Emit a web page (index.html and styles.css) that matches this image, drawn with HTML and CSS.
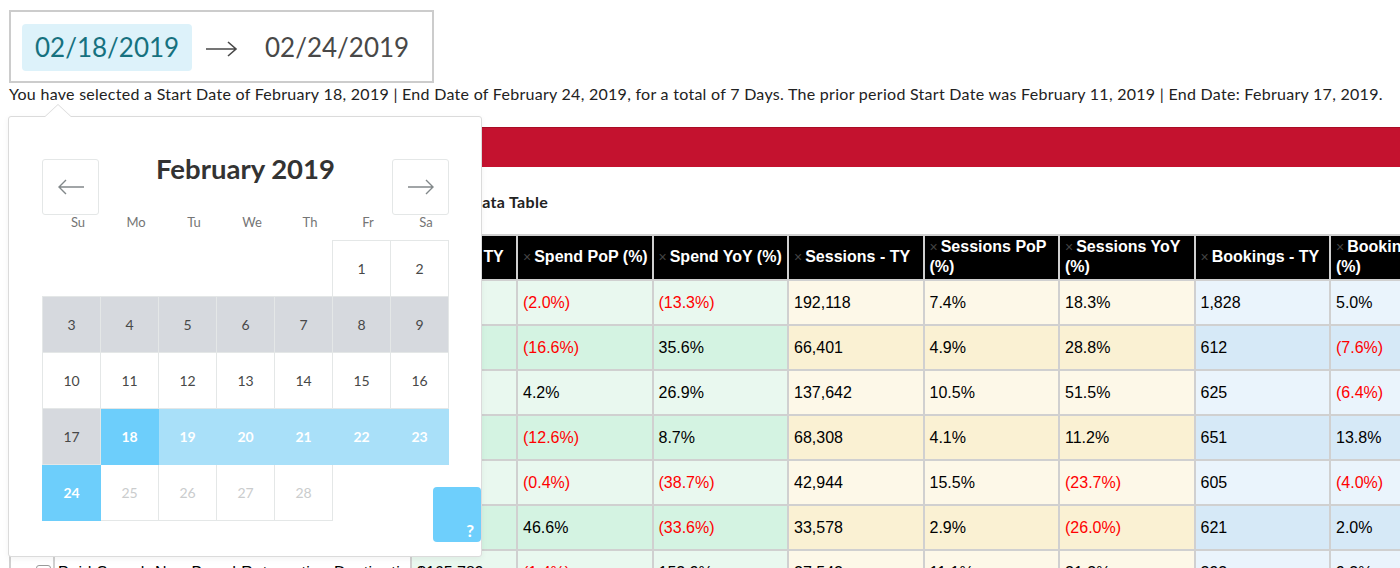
FILE: index.html
```html
<!DOCTYPE html>
<html lang="en">
<head>
    <meta charset="UTF-8">
    <meta name="viewport" content="width=device-width, initial-scale=1.0">
    <title>Channel Performance Report</title>
    <link rel="stylesheet" href="styles.css">
</head>
<body>
    <div class="page">
        <div class="date-range">
            <div class="date-input active">02/18/2019</div>
            <svg class="range-arrow" width="33" height="16" viewBox="0 0 33 16"><path d="M1 8h30M23 1l8 7-8 7" fill="none" stroke="#484848" stroke-width="1.6"/></svg>
            <div class="date-input">02/24/2019</div>
        </div>
        <p class="summary">You have selected a Start Date of February 18, 2019 | End Date of February 24, 2019, for a total of 7 Days. The prior period Start Date was February 11, 2019 | End Date: February 17, 2019.</p>

        <div class="banner"></div>

        <h3 class="table-title">Data Table</h3>

        <div class="table-wrap">
            <table class="report">
                <colgroup>
                    <col style="width:44px"><col style="width:357px"><col style="width:106px">
                    <col style="width:135.5px"><col style="width:135.5px"><col style="width:135.5px">
                    <col style="width:135.5px"><col style="width:135.5px"><col style="width:135.5px">
                    <col style="width:135.5px"><col style="width:135.5px">
                </colgroup>
                <thead>
                    <tr>
                        <th></th>
                        <th><span class="x">×</span>Channel</th>
                        <th class="tight"><span class="x">×</span>Spend - TY</th>
                        <th><span class="x">×</span>Spend PoP (%)</th>
                        <th><span class="x">×</span>Spend YoY (%)</th>
                        <th><span class="x">×</span>Sessions - TY</th>
                        <th><span class="x">×</span>Sessions PoP (%)</th>
                        <th><span class="x">×</span>Sessions YoY (%)</th>
                        <th><span class="x">×</span>Bookings - TY</th>
                        <th><span class="x">×</span>Bookings PoP (%)</th>
                        <th><span class="x">×</span>Bookings YoY (%)</th>
                    </tr>
                </thead>
                <tbody>
                    <tr>
                        <td class="chk-cell"><span class="chk"></span></td>
                        <td class="name">Paid Search Brand</td>
                        <td class="g">$41,256</td>
                        <td class="g neg">(2.0%)</td>
                        <td class="g neg">(13.3%)</td>
                        <td class="y">192,118</td>
                        <td class="y">7.4%</td>
                        <td class="y">18.3%</td>
                        <td class="b">1,828</td>
                        <td class="b">5.0%</td>
                        <td class="b">12.1%</td>
                    </tr>
                    <tr>
                        <td class="chk-cell"><span class="chk"></span></td>
                        <td class="name">Paid Search Non-Brand</td>
                        <td class="g">$23,890</td>
                        <td class="g neg">(16.6%)</td>
                        <td class="g">35.6%</td>
                        <td class="y">66,401</td>
                        <td class="y">4.9%</td>
                        <td class="y">28.8%</td>
                        <td class="b">612</td>
                        <td class="b neg">(7.6%)</td>
                        <td class="b">9.4%</td>
                    </tr>
                    <tr>
                        <td class="chk-cell"><span class="chk"></span></td>
                        <td class="name">Display Prospecting</td>
                        <td class="g">$20,133</td>
                        <td class="g">4.2%</td>
                        <td class="g">26.9%</td>
                        <td class="y">137,642</td>
                        <td class="y">10.5%</td>
                        <td class="y">51.5%</td>
                        <td class="b">625</td>
                        <td class="b neg">(6.4%)</td>
                        <td class="b">3.3%</td>
                    </tr>
                    <tr>
                        <td class="chk-cell"><span class="chk"></span></td>
                        <td class="name">Paid Social</td>
                        <td class="g">$18,721</td>
                        <td class="g neg">(12.6%)</td>
                        <td class="g">8.7%</td>
                        <td class="y">68,308</td>
                        <td class="y">4.1%</td>
                        <td class="y">11.2%</td>
                        <td class="b">651</td>
                        <td class="b">13.8%</td>
                        <td class="b">6.2%</td>
                    </tr>
                    <tr>
                        <td class="chk-cell"><span class="chk"></span></td>
                        <td class="name">Metasearch</td>
                        <td class="g">$17,648</td>
                        <td class="g neg">(0.4%)</td>
                        <td class="g neg">(38.7%)</td>
                        <td class="y">42,944</td>
                        <td class="y">15.5%</td>
                        <td class="y neg">(23.7%)</td>
                        <td class="b">605</td>
                        <td class="b neg">(4.0%)</td>
                        <td class="b neg">(1.8%)</td>
                    </tr>
                    <tr>
                        <td class="chk-cell"><span class="chk"></span></td>
                        <td class="name">Display Retargeting</td>
                        <td class="g">$17,106</td>
                        <td class="g">46.6%</td>
                        <td class="g neg">(33.6%)</td>
                        <td class="y">33,578</td>
                        <td class="y">2.9%</td>
                        <td class="y neg">(26.0%)</td>
                        <td class="b">621</td>
                        <td class="b">2.0%</td>
                        <td class="b">7.7%</td>
                    </tr>
                    <tr>
                        <td class="chk-cell"><span class="chk"></span></td>
                        <td class="name">Paid Search Non-Brand Retargeting Destination</td>
                        <td class="g">$165,789</td>
                        <td class="g neg">(1.4%)</td>
                        <td class="g">152.9%</td>
                        <td class="y">27,542</td>
                        <td class="y">11.1%</td>
                        <td class="y">21.3%</td>
                        <td class="b">293</td>
                        <td class="b">9.3%</td>
                        <td class="b">4.5%</td>
                    </tr>
                </tbody>
            </table>
        </div>
    </div>

    <!-- open date picker, drops down under the start date -->
    <div class="picker">
        <div class="picker-nav">
            <button class="nav-btn"><svg width="28" height="16" viewBox="0 0 28 16"><path d="M27 8H2M9 1L2 8l7 7" fill="none" stroke="#82888a" stroke-width="1.4"/></svg></button>
            <div class="month">February 2019</div>
            <button class="nav-btn"><svg width="28" height="16" viewBox="0 0 28 16"><path d="M1 8h25M19 1l7 7-7 7" fill="none" stroke="#82888a" stroke-width="1.4"/></svg></button>
        </div>
        <div class="weekdays">
            <span>Su</span><span>Mo</span><span>Tu</span><span>We</span><span>Th</span><span>Fr</span><span>Sa</span>
        </div>
        <table class="month-grid">
            <tr>
                <td class="empty"></td><td class="empty"></td><td class="empty"></td><td class="empty"></td><td class="empty"></td>
                <td>1</td><td>2</td>
            </tr>
            <tr>
                <td class="blocked">3</td><td class="blocked">4</td><td class="blocked">5</td><td class="blocked">6</td>
                <td class="blocked">7</td><td class="blocked">8</td><td class="blocked">9</td>
            </tr>
            <tr>
                <td>10</td><td>11</td><td>12</td><td>13</td><td>14</td><td>15</td><td>16</td>
            </tr>
            <tr>
                <td class="blocked">17</td><td class="sel">18</td><td class="span">19</td><td class="span">20</td>
                <td class="span">21</td><td class="span">22</td><td class="span">23</td>
            </tr>
            <tr>
                <td class="sel">24</td><td class="off">25</td><td class="off">26</td><td class="off">27</td><td class="off">28</td>
                <td class="empty"></td><td class="empty"></td>
            </tr>
        </table>
        <button class="help-btn">?</button>
    </div>
</body>
</html>
```

FILE: styles.css
```css
html, body { margin: 0; height: 100%; overflow: hidden; }
body { font-family: Lato, "Open Sans", sans-serif; color: #222; background: #fff; position: relative; }
.page { padding: 10px 0 0 9px; }

.date-range { width: 425px; box-sizing: border-box; border: 2px solid #ccc; padding: 12px 11px 10px; display: flex; align-items: center; }
.date-input { width: 170px; height: 47px; line-height: 47px; padding: 0 13px; box-sizing: border-box; font-size: 26px; color: #484848; border-radius: 4px; }
.date-input.active { background: #ddf2fa; color: #16717f; }
.range-arrow { margin: 3px 14px 0 13px; flex-shrink: 0; }
.summary { margin: 0; font-size: 16px; line-height: 21px; letter-spacing: 0.28px; color: #222; white-space: nowrap; }

.banner { margin-top: 23px; height: 40px; box-sizing: border-box; background: #c4122f; border-top: 1px solid #a80c25; }
.table-title { margin: 25px 0 22px; padding-left: 461px; font-size: 16px; line-height: 20px; font-weight: 700; color: #222; letter-spacing: 0.3px; }

.table-wrap { overflow: hidden; }
.report { border-collapse: collapse; table-layout: fixed; width: 1591px; font-family: "Liberation Sans", Arial, sans-serif; font-size: 16px; color: #000; }
.report th, .report td { border: 2px solid #d0d0d0; text-align: left; }
.report th { background: #000; color: #fff; font-weight: 700; line-height: 20px; padding: 1px 1px 2px 5px; }
.report th.tight { padding-left: 0; letter-spacing: -0.3px; }
.report td { padding: 12px 5px; line-height: 19px; white-space: nowrap; overflow: hidden; }
.report .x { color: #444; font-size: 14px; font-weight: 400; margin-right: 3px; }
.report .chk-cell { text-align: right; padding: 12px 2px 12px 0; }
.chk { display: inline-block; width: 13px; height: 13px; border: 1px solid #999; border-radius: 3px; background: #fff; vertical-align: -2px; }
.report .name { padding-left: 3px; letter-spacing: 0.45px; }
.report .g { background: #e9f8ef; }
.report .y { background: #fdf8e8; }
.report .b { background: #eaf4fc; }
.report tbody tr:nth-child(even) .g { background: #d4f3e2; }
.report tbody tr:nth-child(even) .y { background: #faf1d3; }
.report tbody tr:nth-child(even) .b { background: #d6e9f7; }
.report .neg { color: #f00; }

.picker { position: absolute; left: 8px; top: 116px; width: 474px; height: 441px; box-sizing: border-box; border: 1px solid #dbdbdb; border-radius: 3px; background: #fff; box-shadow: 0 2px 6px rgba(0, 0, 0, 0.05); padding: 42px 32px 0 33px; }
.picker::before, .picker::after { content: ""; position: absolute; left: 35px; border-left: 14px solid transparent; border-right: 14px solid transparent; }
.picker::before { top: -13px; border-bottom: 13px solid #dbdbdb; }
.picker::after { top: -12px; border-bottom: 13px solid #fff; }

.picker-nav { display: flex; justify-content: space-between; align-items: flex-start; height: 56px; }
.nav-btn { width: 57px; height: 56px; border: 1px solid #e4e7e7; border-radius: 3px; background: #fff; padding: 0; display: flex; align-items: center; justify-content: center; }
.month { font-size: 27.5px; font-weight: 700; color: #333; line-height: 28px; margin-top: -4px; }

.weekdays { display: flex; padding-left: 7px; height: 25px; }
.weekdays span { flex: 0 0 58px; text-align: center; font-size: 13px; line-height: 14px; color: #757575; }

.month-grid { border-collapse: collapse; table-layout: fixed; width: 407px; }
.month-grid td { height: 55px; padding: 0; border: 1px solid #e4e7e7; text-align: center; font-size: 14px; color: #484848; }
.month-grid td.empty { border: none; }
.month-grid td.blocked { background: #d6d9de; border-color: #e4e7e7; }
.month-grid td.sel { background: #6dcefb; border-color: #6dcefb; color: #fff; font-weight: 700; }
.month-grid td.span { background: #a9e0f9; border-color: #a9e0f9; color: #fff; font-weight: 700; }
.month-grid td.off { color: #cacccd; }

.help-btn { position: absolute; right: 0; bottom: 14px; width: 48px; height: 55px; border: 0; border-radius: 4px; background: #6ecffc; color: #fff; font: 700 17px Lato, sans-serif; padding: 0 7px 1px 0; display: flex; align-items: flex-end; justify-content: flex-end; }
```
